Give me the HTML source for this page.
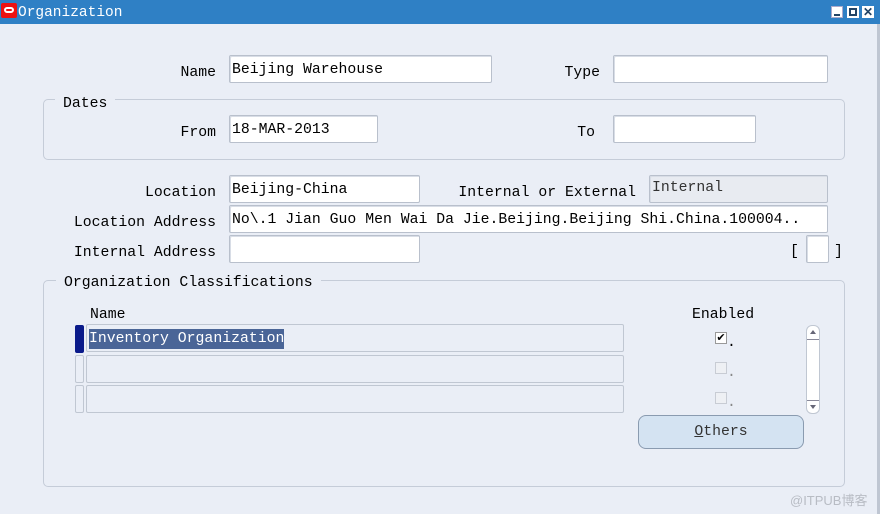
<!DOCTYPE html>
<html><head><meta charset="utf-8"><style>
*{box-sizing:border-box;margin:0;padding:0}
body{width:880px;height:514px;background:#eaeef6;font-family:"Liberation Mono","Noto Sans CJK SC",monospace;font-size:14.8px;color:#000;position:relative;overflow:hidden}
.a{position:absolute}
.title{left:0;top:0;width:880px;height:24px;background:#2f80c5;color:#fff}
.lbl{position:absolute;text-align:right;white-space:nowrap;line-height:18px}
.in{position:absolute;background:#fff;border:1px solid #b9c0cc;border-radius:2px;padding-left:2px;padding-top:2px;line-height:24px;white-space:nowrap;overflow:hidden;box-shadow:inset 1px 1px 0 #d8dde6}
.grp{position:absolute;border:1px solid #c5ccd8;border-radius:5px}
.gl{position:absolute;background:#eaeef6;padding:0 8px;line-height:18px}
.row{position:absolute;left:86px;width:538px;height:28px;border:1px solid #c0c7d2;border-radius:2px;background:#eaeef6}
.ind{position:absolute;left:75px;width:9px;height:28px;border:1px solid #c0c7d2;border-radius:2px;background:#eaeef6}
.cb{position:absolute;left:715px;width:12px;height:12px;border:1px solid #c8ccd4;background:#eef0f4}
</style></head><body>
<div class="a title">
<div class="a" style="left:1px;top:3px;width:16px;height:15px;background:#e11;border-radius:2px"><div class="a" style="left:3px;top:4px;width:10px;height:6px;border:2px solid #fff;border-radius:3px"></div></div>
<div class="a" style="left:18px;top:4px;line-height:18px;font-size:14.5px">Organization</div>
<div class="a" style="left:831px;top:6px;width:12px;height:12px;background:#fff;border:1px solid #aac"><div class="a" style="left:2px;top:7px;width:6px;height:2px;background:#246"></div></div>
<div class="a" style="left:847px;top:6px;width:12px;height:12px;background:#fff"><div class="a" style="left:2px;top:2px;width:8px;height:8px;border:2px solid #246"></div></div>
<div class="a" style="left:862px;top:6px;width:12px;height:12px;background:#fff;color:#246;font:bold 12px 'Liberation Sans';line-height:12px;text-align:center">✕</div>
</div>
<div class="a" style="left:877px;top:24px;width:3px;height:490px;background:#bfc6d2"></div>

<div class="lbl" style="right:664px;top:64px">Name</div>
<div class="in" style="left:229px;top:55px;width:263px;height:28px">Beijing Warehouse</div>
<div class="lbl" style="right:280px;top:64px">Type</div>
<div class="in" style="left:613px;top:55px;width:215px;height:28px"></div>

<div class="grp" style="left:43px;top:99px;width:802px;height:61px"></div>
<div class="gl" style="left:55px;top:95px">Dates</div>
<div class="lbl" style="right:664px;top:124px">From</div>
<div class="in" style="left:229px;top:115px;width:149px;height:28px">18-MAR-2013</div>
<div class="lbl" style="right:285px;top:124px">To</div>
<div class="in" style="left:613px;top:115px;width:143px;height:28px"></div>

<div class="lbl" style="right:664px;top:184px">Location</div>
<div class="in" style="left:229px;top:175px;width:191px;height:28px">Beijing-China</div>
<div class="lbl" style="right:244px;top:184px">Internal or External</div>
<div class="in" style="left:649px;top:175px;width:179px;height:28px;background:#e8ebf1;color:#333;padding-top:0">Internal</div>
<div class="lbl" style="right:664px;top:214px">Location Address</div>
<div class="in" style="left:229px;top:205px;width:599px;height:28px">No\.1 Jian Guo Men Wai Da Jie.Beijing.Beijing Shi.China.100004..</div>
<div class="lbl" style="right:664px;top:244px">Internal Address</div>
<div class="in" style="left:229px;top:235px;width:191px;height:28px"></div>
<div class="lbl" style="left:790px;top:243px">[</div>
<div class="in" style="left:806px;top:235px;width:23px;height:28px"></div>
<div class="lbl" style="left:834px;top:243px">]</div>

<div class="grp" style="left:43px;top:280px;width:802px;height:207px"></div>
<div class="gl" style="left:56px;top:274px">Organization Classifications</div>
<div class="lbl" style="left:90px;top:306px">Name</div>
<div class="ind" style="top:325px;background:#0a1a8a;border-color:#0a1a8a"></div>
<div class="row" style="top:324px"><div class="a" style="left:2px;top:4px;height:20px;background:#4a6597;color:#fff;line-height:20px">Inventory Organization</div></div>
<div class="ind" style="top:355px"></div><div class="row" style="top:355px"></div>
<div class="ind" style="top:385px"></div><div class="row" style="top:385px"></div>
<div class="lbl" style="left:692px;top:306px">Enabled</div>
<div class="cb" style="top:332px;background:#fff;border-color:#999;font:bold 11px 'DejaVu Sans';line-height:10px;text-align:center">✔</div><div class="lbl" style="left:727px;top:334px">.</div>
<div class="cb" style="top:362px"></div><div class="lbl" style="left:727px;top:364px;color:#888">.</div>
<div class="cb" style="top:392px"></div><div class="lbl" style="left:727px;top:394px;color:#888">.</div>
<div class="a" style="left:806px;top:325px;width:14px;height:89px;border:1px solid #c0c7d2;border-radius:6px;background:#fff">
<div class="a" style="left:3px;top:4px;border:3px solid transparent;border-bottom:4px solid #667;border-top:0"></div>
<div class="a" style="left:0;top:13px;width:12px;height:1px;background:#889"></div>
<div class="a" style="left:0;top:74px;width:12px;height:1px;background:#889"></div>
<div class="a" style="left:3px;top:79px;border:3px solid transparent;border-top:4px solid #667;border-bottom:0"></div>
</div>
<div class="a" style="left:638px;top:415px;width:166px;height:34px;border:1px solid #8a9bb0;border-radius:8px;background:#d4e3f2;text-align:center;line-height:32px;color:#333"><u>O</u>thers</div>
<div class="a" style="left:790px;top:490px;font-family:'Liberation Sans','Noto Sans CJK SC',sans-serif;font-size:13px;color:#b8bcc4">@ITPUB博客</div>
</body></html>
